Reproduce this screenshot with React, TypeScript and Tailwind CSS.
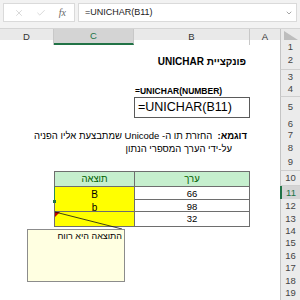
import { Check, ChevronDown, X } from "lucide-react";

const FONT = { fontFamily: '"Liberation Sans", Arial, sans-serif' };

// row heights of the sheet, rows 1..19
const HEIGHTS = [12, 18, 12, 15, 20, 11, 13, 14, 16, 15, 13, 12, 13, 12, 13, 12, 13, 12, 14];

function RowNum({ n, active }: { n: number; active?: boolean }) {
  return (
    <div
      className={
        active
          ? "flex items-center justify-center border-b border-[#c9c9c9] border-l-2 border-l-[#217346] bg-[#d4d4d4] text-[9.5px] text-[#217346]"
          : "flex items-center justify-center border-b border-l border-[#cfcfcf] border-l-[#c4c4c4] bg-[#ebebeb] text-[9.5px] text-[#444]"
      }
    >
      {n}
    </div>
  );
}

function Row({ n, children }: { n: number; children?: React.ReactNode }) {
  return (
    <div
      className="grid grid-cols-[54px_80px_116px_30px_20px] bg-white"
      style={{ height: HEIGHTS[n - 1] }}
    >
      {children ?? (
        <>
          <div />
          <div />
          <div />
          <div />
        </>
      )}
      <RowNum n={n} active={n === 11} />
    </div>
  );
}

export default function App() {
  return (
    <div className="relative h-[300px] w-[300px] overflow-hidden bg-[#f2f2f2]" style={FONT}>
      {/* formula bar */}
      <div className="flex h-[28px] gap-[3px] px-[3px] pt-[3px]">
        <div className="flex h-[19px] w-[72px] items-center justify-around border border-[#dadada] bg-white pl-[4px] pr-[2px]">
          <X size={10} strokeWidth={1.3} className="text-[#b9b9b9]" />
          <Check size={10} strokeWidth={1.3} className="text-[#b9b9b9]" />
          <span className="text-[10px] italic text-[#666]" style={{ fontFamily: '"Liberation Serif", serif' }}>
            fx
          </span>
        </div>
        <div className="flex h-[19px] flex-1 items-center justify-between border border-[#dadada] bg-white pl-[6px] pr-[3px]">
          <span className="text-[9px] text-[#222]">=UNICHAR(B11)</span>
          <ChevronDown size={8} strokeWidth={2} className="text-[#777]" />
        </div>
      </div>

      {/* column headers */}
      <div className="grid h-[12px] grid-cols-[54px_80px_116px_30px_20px] border-t border-[#d4d4d4] bg-[#e9e9e9] text-[9.5px] text-[#333]">
        <div className="flex items-center justify-center border-r border-[#c8c8c8]">D</div>
        <div className="flex items-center justify-center border-b-2 border-r border-[#c8c8c8] border-b-[#217346] bg-[#d4d4d4] text-[#217346]">
          C
        </div>
        <div className="flex items-center justify-center border-r border-[#c8c8c8]">B</div>
        <div className="flex items-center justify-center">A</div>
        <div className="relative border-l border-[#c4c4c4]">
          <svg width="20" height="12" className="absolute left-0 top-0">
            <polygon points="3,2 3,11 17,11" fill="#bdbdbd" />
          </svg>
        </div>
      </div>

      <Row n={1} />
      <Row n={2}>
        <div />
        <div />
        <div dir="rtl" className="flex items-center whitespace-nowrap pr-[4px] text-[10px] font-bold text-black">
          פונקציית UNICHAR
        </div>
        <div />
      </Row>
      <Row n={3} />
      <Row n={4}>
        <div />
        <div />
        <div className="flex items-end whitespace-nowrap pl-[1px] text-[8.5px] font-bold text-black">
          =UNICHAR(NUMBER)
        </div>
        <div />
      </Row>
      <Row n={5}>
        <div />
        <div />
        <div className="flex items-center border border-[#5a5a5a] pl-[3px] text-[12.5px] text-black">
          =UNICHAR(B11)
        </div>
        <div />
      </Row>
      <Row n={6} />
      <Row n={7}>
        <div
          dir="rtl"
          className="col-span-3 flex items-center whitespace-nowrap pr-[3px] text-[9.5px] text-black"
        >
          <span className="font-bold">דוגמא:</span>
          <span>&nbsp; החזרת תו ה- Unicode שמתבצעת אליו הפניה</span>
        </div>
        <div />
      </Row>
      <Row n={8}>
        <div
          dir="rtl"
          className="col-span-3 flex items-center whitespace-nowrap pr-[18px] text-[9.5px] text-black"
        >
          על-ידי הערך המספרי הנתון
        </div>
        <div />
      </Row>
      <Row n={9} />
      <Row n={10}>
        <div />
        <div className="flex items-center justify-center border-l border-t border-[#6e6e6e] bg-[#c6efce] text-[9.5px] text-[#006100]">
          תוצאה
        </div>
        <div className="flex items-center justify-center border-l border-r border-t border-[#6e6e6e] bg-[#c6efce] text-[9.5px] text-[#006100]">
          ערך
        </div>
        <div />
      </Row>
      <Row n={11}>
        <div />
        <div className="relative flex items-center justify-center border-l border-t border-[#6e6e6e] border-l-[#2e8b57] bg-[#ffff00] text-[10px] text-black">
          B
          <span className="absolute -bottom-[1px] -left-[2px] h-[3px] w-[3px] bg-[#217346]" />
        </div>
        <div className="flex items-center justify-center border-l border-r border-t border-[#6e6e6e] text-[9.5px] text-black">
          66
        </div>
        <div />
      </Row>
      <Row n={12}>
        <div />
        <div className="flex items-center justify-center border-l border-t border-[#6e6e6e] bg-[#ffff00] text-[10px] text-black">
          b
        </div>
        <div className="flex items-center justify-center border-l border-r border-t border-[#6e6e6e] text-[9.5px] text-black">
          98
        </div>
        <div />
      </Row>
      <Row n={13}>
        <div />
        <div className="relative flex items-center justify-center border-b border-l border-t border-[#6e6e6e] bg-[#ffff00] text-[10px] text-black">
          <svg width="5" height="5" className="absolute left-0 top-0">
            <polygon points="0,0 5,0 0,5" fill="#c00000" />
          </svg>
        </div>
        <div className="flex items-center justify-center border border-[#6e6e6e] text-[9.5px] text-black">
          32
        </div>
        <div />
      </Row>
      {Array.from({ length: 6 }, (_, i) => (
        <Row key={i} n={14 + i} />
      ))}

      {/* comment */}
      <svg width="300" height="300" className="pointer-events-none absolute left-0 top-0">
        <line x1="55" y1="212" x2="122" y2="229" stroke="#111" strokeWidth="0.8" />
      </svg>
      <div
        dir="rtl"
        className="absolute left-[27px] top-[229px] h-[53px] w-[98px] border border-[#8c8c8c] bg-[#ffffe1] pr-[2px] pt-[1px] text-[9px] leading-[11px] text-black"
      >
        התוצאה היא רווח
      </div>
    </div>
  );
}
